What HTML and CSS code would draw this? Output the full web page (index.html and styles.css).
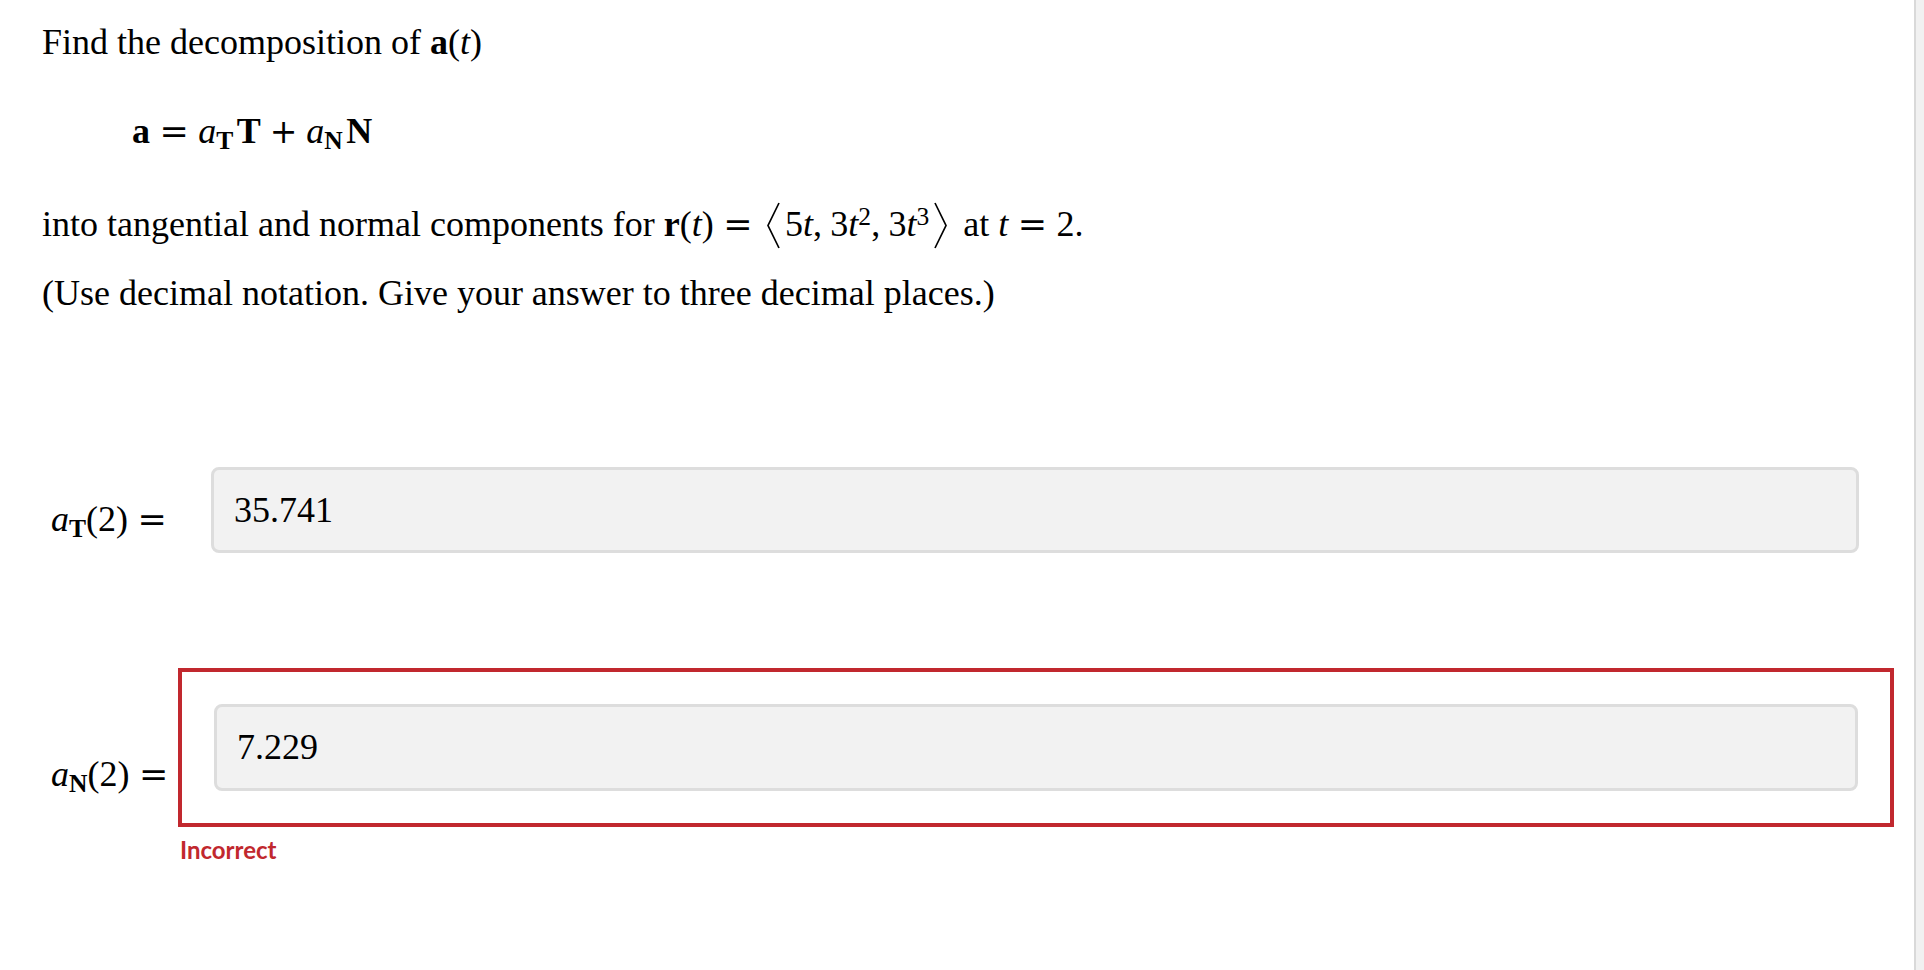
FILE: index.html
```html
<!DOCTYPE html>
<html lang="en">
<head>
<meta charset="utf-8">
<title>Decomposition of acceleration</title>
<link rel="stylesheet" href="styles.css">
</head>
<body>
<div class="page">
  <main class="content">
    <p class="line l1">Find the decomposition of <b>a</b>(<i>t</i>)</p>
    <p class="line l2"><b>a</b><span class="op">=</span><i>a</i><sub class="bs gap">T</sub><b>T</b><span class="op plus">+</span><i>a</i><sub class="bs gap">N</sub><b>N</b></p>
    <p class="line l3">into tangential and normal components for <b>r</b>(<i>t</i>)<span class="op">=</span><svg class="brk lb" width="18" height="47" viewBox="0 0 18 47"><polyline points="15,1 4,23.5 15,46" fill="none" stroke="#000" stroke-width="1.7"/></svg>5<i>t</i>,<span class="th"></span>3<i>t</i><sup>2</sup>,<span class="th"></span>3<i>t</i><sup>3</sup><svg class="brk rb" width="18" height="47" viewBox="0 0 18 47"><polyline points="3,1 14,23.5 3,46" fill="none" stroke="#000" stroke-width="1.7"/></svg> at <i>t</i><span class="op">=</span>2.</p>
    <p class="line l4">(Use decimal notation. Give your answer to three decimal places.)</p>

    <div class="row r1">
      <span class="label"><i>a</i><sub class="bs">T</sub>(2)<span class="op">=</span></span>
      <div class="field f1">35.741</div>
    </div>

    <div class="row r2">
      <span class="label"><i>a</i><sub class="bs">N</sub>(2)<span class="op">=</span></span>
      <div class="wrong">
        <div class="field f2">7.229</div>
      </div>
    </div>
    <div class="msg">Incorrect</div>
  </main>
  <div class="scrollbar"></div>
</div>
</body>
</html>
```

FILE: styles.css
```css
html, body {
  margin: 0;
  padding: 0;
  background: #ffffff;
}
body {
  font-family: "Liberation Serif", "Times New Roman", serif;
  color: #000000;
}
.page {
  display: flex;
  height: 970px;
  overflow: hidden;
}
.content {
  flex: 1;
  padding: 22px 0 0 42px;
}
.line {
  margin: 0;
  font-size: 36px;
  line-height: 40px;
  white-space: nowrap;
}
.l2 { margin-top: 49px; padding-left: 90px; }
.l3 { margin-top: 53px; }
.l4 { margin-top: 29px; }

.op {
  font-family: "DejaVu Serif", serif;
  font-size: 35px;
  line-height: 0;
  padding: 0 0.27em;
}
.plus { font-size: 33px; }
.th { display: inline-block; width: 0.23em; }

sub, sup {
  line-height: 0;
  font-size: 0.71em;
}
sub { vertical-align: -0.22em; }
sup { vertical-align: 0.42em; }
.bs { font-weight: 700; }
.gap { margin-right: 3px; letter-spacing: 0.5px; }

.brk {
  vertical-align: baseline;
  margin-top: -10px;
  margin-bottom: -13px;
}
.lb { margin-left: 2px; margin-right: 3px; }
.rb { margin-left: 3px; margin-right: 4px; }

.row {
  display: flex;
  align-items: flex-start;
}
.label {
  font-size: 36px;
  line-height: 40px;
  padding-left: 9px;
  box-sizing: border-box;
  white-space: nowrap;
}
.r1 { margin-top: 154px; }
.r1 .label { width: 169px; flex: none; margin-top: 32px; }
.r2 { margin-top: 115px; }
.r2 .label { width: 136px; flex: none; margin-top: 86px; }

.field {
  box-sizing: border-box;
  border: 3px solid #dddddd;
  border-radius: 8px;
  background: #f2f2f2;
  padding-left: 20px;
  font-size: 36px;
}
.f1 {
  flex: 1;
  height: 86px;
  line-height: 80px;
  margin-right: 55px;
}
.f2 {
  height: 87px;
  line-height: 81px;
}
.wrong {
  flex: 1;
  border: 4px solid #c1282e;
  padding: 32px;
  margin-right: 20px;
}
.msg {
  margin: 8px 0 0 138px;
  font-family: Lato, "Open Sans", sans-serif;
  font-weight: 700;
  font-size: 24px;
  line-height: 30px;
  color: #c1282e;
}
.scrollbar {
  flex: none;
  width: 8px;
  border-left: 2px solid #d9d9d9;
  background: #f1f1f1;
}
```
